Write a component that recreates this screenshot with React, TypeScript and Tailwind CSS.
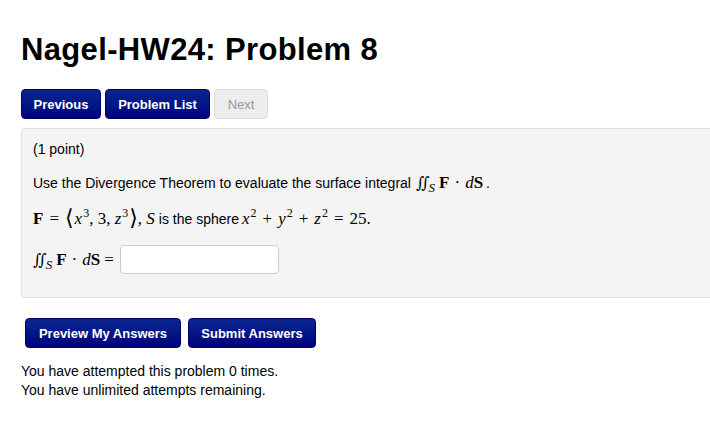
import React from 'react';

const navBtn =
  'h-[30px] rounded-[4px] border border-[#00005e] bg-gradient-to-b from-[#0b2590] to-[#00007f] text-white text-[13px] font-bold leading-none whitespace-nowrap';

const serif = "font-['Liberation_Serif','DejaVu_Serif',serif]";

const Sup = ({ children }: { children: React.ReactNode }) => (
  <span className="text-[12px] relative top-[-6px] ml-[1px]">{children}</span>
);

const Integral = () => (
  <span className={`inline-flex items-end ${serif}`}>
    <span className="font-['DejaVu_Serif',serif] italic text-[16px] leading-none tracking-[-1px]">∬</span>
    <span className="italic text-[13px] leading-none relative top-[3px]">S</span>
  </span>
);

const FdS = () => (
  <span className={`${serif} text-[17px] flex items-center`}>
    <b>F</b>
    <span className="mx-[5px]">·</span>
    <i>d</i>
    <b>S</b>
  </span>
);

export default function App() {
  return (
    <div className="w-full overflow-hidden bg-white text-black font-['Liberation_Sans',Arial,sans-serif] pl-[21px] pb-6">
      <h1 className="pt-[30px] text-[31px] font-bold leading-[40px] tracking-[0.35px]">Nagel-HW24: Problem 8</h1>

      <div className="mt-[19px] flex gap-[4px]">
        <button className={`${navBtn} w-[80px]`}>Previous</button>
        <button className={`${navBtn} w-[105px]`}>Problem List</button>
        <button className="h-[30px] w-[54px] rounded-[4px] border border-[#dcdcdc] bg-[#ededed] text-[#9a9a9a] text-[13px] leading-none">
          Next
        </button>
      </div>

      <div className="mt-[9px] w-[760px] h-[170px] rounded-[4px] border border-[#e0e0e0] bg-[#f4f4f4] px-[11px] pt-[10px] text-[14px]">
        <p className="leading-[20px]">(1 point)</p>

        <div className="mt-[14px] leading-[20px] flex items-center">
          <span>Use the Divergence Theorem to evaluate the surface integral</span>
          <span className="ml-[5px]">
            <Integral />
          </span>
          <span className="ml-[4px]">
            <FdS />
          </span>
          <span className="ml-[3px]">.</span>
        </div>

        <div className={`mt-[14px] leading-[24px] flex items-center`}>
          <span className={`${serif} text-[17px] flex items-center`}>
            <b>F</b>
            <span className="mx-[6px]">=</span>
            <span className="font-['DejaVu_Serif',serif] text-[22px] leading-none relative top-[-1px] mr-[1px]">⟨</span>
            <i>x</i>
            <Sup>3</Sup>
            <span>, 3,&nbsp;</span>
            <i>z</i>
            <Sup>3</Sup>
            <span className="font-['DejaVu_Serif',serif] text-[22px] leading-none relative top-[-1px] ml-[1px]">⟩</span>
            <span>,&nbsp;</span>
            <i>S</i>
          </span>
          <span className="ml-[4px]">is the sphere</span>
          <span className={`${serif} text-[17px] flex items-center ml-[3px]`}>
            <i>x</i>
            <Sup>2</Sup>
            <span className="mx-[6px]">+</span>
            <i>y</i>
            <Sup>2</Sup>
            <span className="mx-[6px]">+</span>
            <i>z</i>
            <Sup>2</Sup>
            <span className="mx-[6px]">=</span>
            <span>25.</span>
          </span>
        </div>

        <div className="mt-[14px] flex items-center">
          <Integral />
          <span className="ml-[4px]">
            <FdS />
          </span>
          <span className={`${serif} text-[17px] ml-[4px]`}>=</span>
          <input className="ml-[6px] h-[29px] w-[159px] rounded-[4px] border border-[#cccccc] bg-white px-2" />
        </div>
      </div>

      <div className="mt-[20px] ml-[4px] flex gap-[7px]">
        <button className={`${navBtn} w-[156px]`}>Preview My Answers</button>
        <button className={`${navBtn} w-[128px]`}>Submit Answers</button>
      </div>

      <div className="mt-[14px] text-[14px] leading-[19px]">
        <p>You have attempted this problem 0 times.</p>
        <p>You have unlimited attempts remaining.</p>
      </div>
    </div>
  );
}
